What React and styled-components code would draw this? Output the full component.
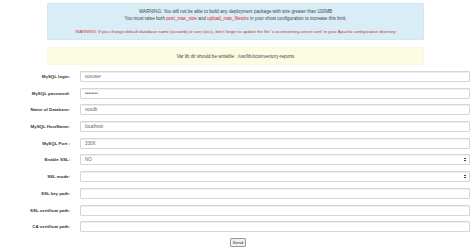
import React from "react";
import styled, { createGlobalStyle } from "styled-components";

const Global = createGlobalStyle`
  html, body { margin: 0; padding: 0; background: #fff; }
  body { font-family: "Liberation Sans", Arial, sans-serif; color: #333; }
`;

const Page = styled.div`
  width: 474px;
  height: 250px;
  overflow: hidden;
  padding-top: 3px;
  box-sizing: border-box;
`;

const Alert = styled.div`
  box-sizing: border-box;
  width: 377px;
  margin-left: 47px;
  margin-top: ${(p) => p.$mt || 0}px;
  background: ${(p) => (p.$kind === "info" ? "#d9edf7" : "#fcfce3")};
  border: 1px solid ${(p) => (p.$kind === "info" ? "#cfe6f3" : "#f8f8dc")};
  border-radius: 1px;
  padding: ${(p) => p.$pad};
  text-align: center;
  font-size: 4.6px;
  line-height: 7px;
  color: #444;
`;

const Line = styled.div`
  color: ${(p) => (p.$red ? "#c9302c" : "#444")};
  font-size: ${(p) => (p.$red ? "4.3px" : "inherit")};
  margin-top: ${(p) => p.$mt || 0}px;
  white-space: nowrap;
`;

const Red = styled.span`
  color: #d9262c;
`;

const Form = styled.div`
  margin-top: 6px;
  display: flex;
  flex-direction: column;
  gap: 5.7px;
`;

const Row = styled.div`
  display: flex;
  align-items: center;
  height: 11px;
`;

const Label = styled.div`
  width: 70px;
  text-align: right;
  font-weight: bold;
  font-size: 4.4px;
  color: #333;
  padding-right: 10px;
  white-space: nowrap;
`;

const Field = styled.div`
  box-sizing: border-box;
  width: 390px;
  height: 11px;
  border: 1px solid #d6d6d6;
  border-radius: 1px;
  background: #fff;
  display: flex;
  align-items: center;
  justify-content: space-between;
  padding: 0 3px 0 4px;
  font-size: 4.6px;
  color: #666;
  box-shadow: inset 0 1px 0 #eee;
`;

const Arrow = styled.span`
  width: 2px;
  height: 3px;
  display: flex;
  flex-direction: column;
  justify-content: space-between;
  &::before, &::after {
    content: "";
    display: block;
    height: 1px;
    background: #444;
  }
`;

const Footer = styled.div`
  display: flex;
  justify-content: center;
  margin-top: 6px;
`;

const Button = styled.button`
  box-sizing: border-box;
  width: 16px;
  height: 9px;
  padding: 0;
  font-family: "Liberation Sans", Arial, sans-serif;
  font-size: 4.4px;
  color: #333;
  background: #f0f0f0;
  border: 1px solid #999;
  border-radius: 1px;
  margin-left: 2px;
`;

const rows = [
  { label: "MySQL login:", value: "ocsuser" },
  { label: "MySQL password:", value: "••••••••" },
  { label: "Name of Database:", value: "ocsdb" },
  { label: "MySQL HostName:", value: "localhost" },
  { label: "MySQL Port :", value: "3306" },
  { label: "Enable SSL:", value: "NO", select: true },
  { label: "SSL mode:", value: "", select: true },
  { label: "SSL key path:", value: "" },
  { label: "SSL certificat path:", value: "" },
  { label: "CA certificat path:", value: "" },
];

export default function App() {
  return (
    <Page>
      <Global />
      <Alert $kind="info" $pad="4px 0 4px">
        <Line>WARNING: You will not be able to build any deployment package with size greater than 100MB</Line>
        <Line>
          You must raise both <Red>post_max_size</Red> and <Red>upload_max_filesize</Red> in your vhost configuration to increase this limit.
        </Line>
        <Line $red $mt={6}>
          WARNING: If you change default database name (ocsweb) or user (ocs), don't forget to update the file 'z-ocsinventory-server.conf' in your Apache configuration directory
        </Line>
      </Alert>
      <Alert $kind="warn" $pad="5px 0 4px" $mt={7}>
        <Line>Var lib dir should be writable : /usr/lib/ocsinventory-reports</Line>
      </Alert>
      <Form>
        {rows.map((r) => (
          <Row key={r.label}>
            <Label>{r.label}</Label>
            <Field>
              <span>{r.value}</span>
              {r.select && <Arrow />}
            </Field>
          </Row>
        ))}
      </Form>
      <Footer>
        <Button>Send</Button>
      </Footer>
    </Page>
  );
}
